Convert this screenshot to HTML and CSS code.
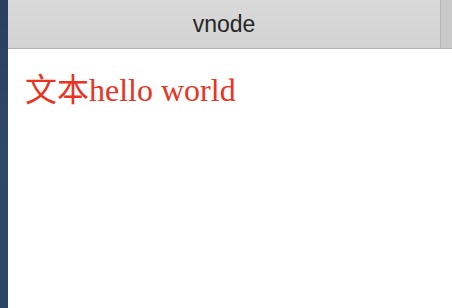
FILE: index.html
```html
<!DOCTYPE html>
<html>
<head>
<meta charset="utf-8">
<link rel="stylesheet" href="styles.css">
</head>
<body>
<div class="window">
  <div class="strip"></div>
  <div class="main">
    <div class="tabbar">
      <div class="tab">vnode</div>
      <div class="divider"></div>
      <div class="extra"></div>
    </div>
    <div class="content">
      <p class="msg">文本hello world</p>
    </div>
  </div>
</div>
</body>
</html>
```
FILE: styles.css
```css
html, body {
  margin: 0;
  padding: 0;
  width: 452px;
  height: 308px;
  overflow: hidden;
  background: #ffffff;
}
.window {
  display: flex;
  width: 452px;
  height: 308px;
}
.strip {
  width: 8px;
  flex: none;
  background: linear-gradient(180deg, #2a3f60 0%, #2f4769 50%, #2c4466 100%);
}
.main {
  flex: 1;
  display: flex;
  flex-direction: column;
  min-width: 0;
}
.tabbar {
  display: flex;
  height: 48px;
  border-bottom: 1px solid #b2b2b2;
  flex: none;
}
.tab {
  flex: 1;
  display: flex;
  align-items: center;
  justify-content: center;
  background: linear-gradient(180deg, #d9d9d9 0%, #d3d3d3 100%);
  font-family: "Liberation Sans", Arial, sans-serif;
  font-size: 23px;
  color: #262626;
  padding-top: 1px;
}
.divider {
  width: 1px;
  flex: none;
  background: #b6b6b6;
}
.extra {
  width: 11px;
  flex: none;
  background: #c9c9c9;
}
.content {
  flex: 1;
  background: #ffffff;
  padding: 23px 17px 0;
}
.msg {
  margin: 0;
  font-family: "Liberation Serif", "Noto Sans CJK SC", serif;
  font-size: 32px;
  line-height: 36px;
  color: #ea3323;
  white-space: nowrap;
}
```
